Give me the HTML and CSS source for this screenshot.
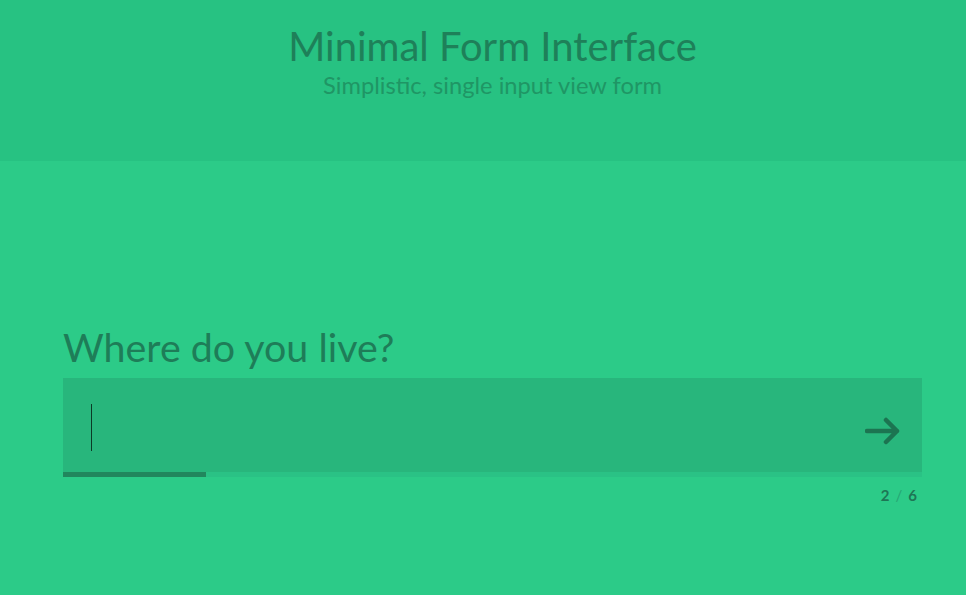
FILE: index.html
```html
<!DOCTYPE html>
<html lang="en">
<head>
<meta charset="utf-8">
<title>Minimal Form Interface</title>
<link rel="stylesheet" href="styles.css">
</head>
<body>
<header class="header">
  <h1 class="title">Minimal Form Interface</h1>
  <p class="subtitle">Simplistic, single input view form</p>
</header>
<main class="main">
  <form class="form">
    <label class="question" for="q2">Where do you live?</label>
    <div class="field">
      <span class="caret"></span>
      <input id="q2" class="input" type="text" aria-label="Where do you live?">
      <button class="next" type="button" aria-label="Next">
        <svg width="36" height="30" viewBox="0 0 36 30"><path d="M2 15H32M21 4L32 15L21 26" fill="none" stroke="currentColor" stroke-width="4.5" stroke-linecap="round" stroke-linejoin="round"/></svg>
      </button>
    </div>
    <div class="progress"><div class="progress-bar" style="width:16.667%"></div></div>
    <div class="counter"><span class="num">2</span><span class="sep">/</span><span class="num">6</span></div>
  </form>
</main>
</body>
</html>
```
FILE: styles.css
```css
html, body {
  margin: 0;
  padding: 0;
  height: 100%;
}
body {
  background: #2ccb88;
  font-family: Lato, "Open Sans", sans-serif;
  color: #1d7a55;
  overflow: hidden;
}
.header {
  background: #27c282;
  height: 161px;
  box-sizing: border-box;
  padding: 23px 0 0 19px;
  text-align: center;
}
.title {
  margin: 0;
  font-weight: 400;
  font-size: 40px;
  line-height: 46px;
  color: #1e8059;
}
.subtitle {
  margin: 3px 0 0;
  font-size: 23.7px;
  line-height: 26px;
  color: #1f9665;
}
.main {
  padding: 162px 44px 0 63px;
}
.question {
  display: block;
  font-size: 39.4px;
  line-height: 48px;
  height: 55px;
  color: #1e7d58;
}
.field {
  display: flex;
  align-items: center;
  height: 94px;
  background: #28b67c;
  position: relative;
}
.caret {
  width: 1px;
  height: 47px;
  background: #0b3a26;
  margin: 5px 0 0 28px;
  flex: none;
}
.input {
  flex: 1;
  height: 100%;
  border: 0;
  background: transparent;
  outline: none;
  font: inherit;
  font-size: 30px;
  color: #1e7d58;
  padding: 0 10px;
}
.next {
  border: 0;
  background: transparent;
  color: #1c7451;
  padding: 0;
  margin: 12px 20px 0 0;
  width: 38px;
  height: 32px;
  display: flex;
  align-items: center;
  justify-content: center;
}
.progress {
  height: 5px;
  background: #2ac285;
}
.progress-bar {
  height: 100%;
  background: #21875d;
}
.counter {
  text-align: right;
  padding-right: 5px;
  margin-top: 9px;
  font-size: 15px;
  font-weight: 700;
  color: #1e7655;
}
.sep {
  font-weight: 400;
  color: #26a574;
  margin: 0 6px;
}
```
